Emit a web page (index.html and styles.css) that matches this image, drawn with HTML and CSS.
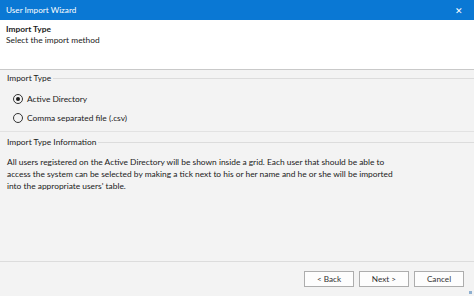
FILE: index.html
```html
<!DOCTYPE html>
<html lang="en">

<head>
    <meta charset="UTF-8">
    <title>User Import Wizard</title>
    <link rel="stylesheet" href="styles.css">
</head>

<body>
    <div class="window">
        <div class="titlebar">
            <span class="title">User Import Wizard</span>
            <span class="close">&#x2715;</span>
        </div>

        <div class="header">
            <div class="header-title">Import Type</div>
            <div class="header-sub">Select the import method</div>
        </div>

        <div class="content">
            <!-- first group: radio choices -->
            <div class="group group-type">
                <div class="group-legend"><span>Import Type</span></div>
                <label class="radio-row">
                    <span class="radio checked"></span>
                    <span>Active Directory</span>
                </label>
                <label class="radio-row">
                    <span class="radio"></span>
                    <span>Comma separated file (.csv)</span>
                </label>
            </div>

            <!-- second group: description -->
            <div class="group group-info">
                <div class="group-legend"><span>Import Type Information</span></div>
                <p class="info-text">All users registered on the Active Directory will be shown inside a grid. Each user that should be able to
                    access the system can be selected by making a tick next to his or her name and he or she will be imported
                    into the appropriate users' table.</p>
            </div>
        </div>

        <div class="footer">
            <button class="btn btn-back">&lt; Back</button>
            <button class="btn btn-next">Next &gt;</button>
            <button class="btn btn-cancel">Cancel</button>
        </div>
        <span class="grip"></span>
    </div>
</body>

</html>
```

FILE: styles.css
```css
* {
    margin: 0;
    padding: 0;
    box-sizing: border-box;
}

html,
body {
    width: 474px;
    height: 296px;
    overflow: hidden;
    font-family: 'Lato', 'Noto Sans', sans-serif;
    font-size: 8.4px;
    color: #1a1a1a;
}

.window {
    position: relative;
    display: flex;
    flex-direction: column;
    width: 474px;
    height: 296px;
    background-color: #f3f3f3;
}

.titlebar {
    height: 20px;
    background-color: #0a78d4;
    color: #ffffff;
    display: flex;
    align-items: center;
    justify-content: space-between;
    padding: 0 6px 0 6px;
}

.title {
    font-size: 8.2px;
}

.close {
    font-size: 9px;
    margin-right: 5px;
}

.header {
    height: 50px;
    background-color: #ffffff;
    border-bottom: 1px solid #c9c9c9;
    padding: 4px 6px 0 6px;
    line-height: 11px;
}

.header-title {
    font-weight: 700;
}

.content {
    flex: 1;
    display: flex;
    flex-direction: column;
}

.group {
    border-bottom: 1px solid #e2e2e2;
}

.group-type {
    height: 62px;
    padding-top: 2px;
}

.group-legend {
    display: flex;
    align-items: center;
    gap: 2px;
    height: 12px;
    padding-left: 7px;
}

.group-legend::after {
    content: "";
    flex: 1;
    height: 1px;
    background-color: #dcdcdc;
}

.group-type .group-legend {
    margin-bottom: 5px;
}

.radio-row {
    display: flex;
    align-items: center;
    gap: 4px;
    height: 19px;
    padding-left: 13px;
}

.radio {
    width: 10px;
    height: 10px;
    border: 1px solid #333333;
    border-radius: 50%;
    display: flex;
    align-items: center;
    justify-content: center;
}

.radio.checked::after {
    content: "";
    width: 4px;
    height: 4px;
    border-radius: 50%;
    background-color: #1a1a1a;
}

.group-info {
    border-bottom: none;
    flex: 1;
    padding-top: 4px;
}

.info-text {
    padding: 8px 7px 0 7px;
    line-height: 12px;
    white-space: pre-line;
}

.footer {
    height: 35px;
    border-top: 1px solid #dcdcdc;
    display: flex;
    justify-content: flex-end;
    align-items: center;
    gap: 5px;
    padding: 0 10px 0 0;
}

.btn {
    width: 50px;
    height: 16px;
    font-family: inherit;
    font-size: 8.2px;
    color: #333333;
    background-color: #fdfdfd;
    border: 1px solid #adadad;
}

.grip {
    position: absolute;
    right: 2px;
    bottom: 2px;
    width: 3px;
    height: 3px;
    background-color: #8fb0d0;
}
```
